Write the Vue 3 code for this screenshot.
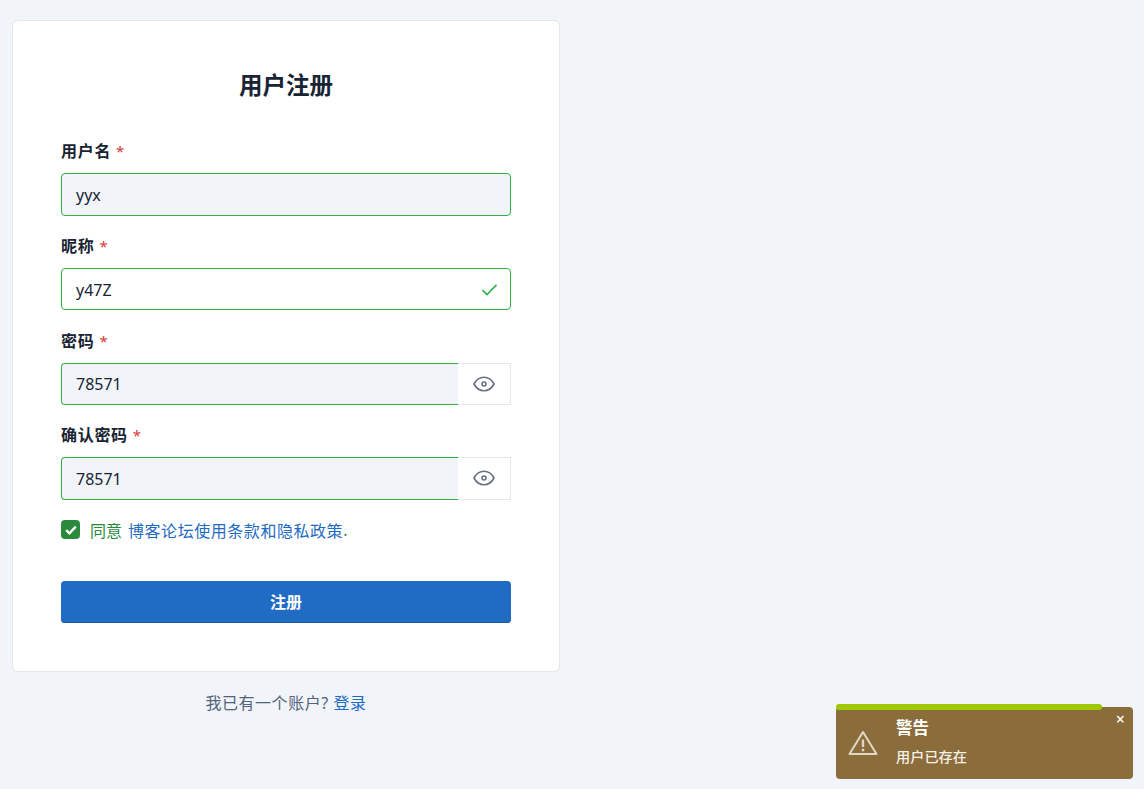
<script setup>
const fields = [
  { label: '用户名', value: 'yyx', kind: 'filled' },
  { label: '昵称', value: 'y47Z', kind: 'check' },
  { label: '密码', value: '78571', kind: 'eye' },
  { label: '确认密码', value: '78571', kind: 'eye' },
]
</script>

<template>
  <main class="page">
    <section class="card">
      <h1 class="title">用户注册</h1>
      <form class="form" @submit.prevent>
        <div v-for="f in fields" :key="f.label" class="field">
          <label class="label">{{ f.label }}<span class="req">*</span></label>
          <div class="group">
            <div class="input" :class="{ white: f.kind === 'check', joined: f.kind === 'eye' }">
              <span>{{ f.value }}</span>
              <svg v-if="f.kind === 'check'" class="check" width="15" height="12" viewBox="0 0 15 12" fill="none">
                <path d="M.5 6 5 10.500 14.500.8" stroke="#2fb344" stroke-width="1.600" />
              </svg>
            </div>
            <button v-if="f.kind === 'eye'" type="button" class="eye">
              <svg width="22" height="16" viewBox="0 0 22 16" fill="none" stroke="#667085" stroke-width="1.600">
                <path d="M1 8C3.500 3.400 7 1.200 11 1.200S18.500 3.400 21 8c-2.500 4.600-6 6.800-10 6.800S3.500 12.600 1 8Z" />
                <circle cx="11" cy="8" r="2" />
              </svg>
            </button>
          </div>
        </div>
        <div class="agree">
          <span class="box">
            <svg width="12" height="10" viewBox="0 0 12 10" fill="none"><path d="M1.200 5.200 4.400 8.300 10.800 1.600" stroke="#fff" stroke-width="2.400" /></svg>
          </span>
          <span class="agree-text">同意</span>
          <a class="link terms">博客论坛使用条款和隐私政策</a><span class="dot">.</span>
        </div>
        <button type="button" class="submit">注册</button>
      </form>
    </section>
    <p class="foot">我已有一个账户? <a class="link">登录</a></p>

    <aside class="toast">
      <div class="bar"></div>
      <svg class="warn" width="30" height="26" viewBox="0 0 30 26" fill="none" stroke="#e0d8c6" stroke-width="2">
        <path d="M15 2 28.500 24H1.500Z" stroke-linejoin="round" />
        <path d="M15 9.500v7.500M15 18.800v2.400" stroke-width="2.400" />
      </svg>
      <div class="toast-body">
        <div class="toast-title">警告</div>
        <div class="toast-msg">用户已存在</div>
      </div>
      <span class="close">×</span>
    </aside>
  </main>
</template>

<style>
html, body { margin: 0; background: #f1f4f9; }
</style>

<style scoped>
.page {
  min-height: 789px;
  box-sizing: border-box;
  padding: 20px 0 0 12px;
  width: 1144px;
  font-family: "Noto Sans", "Noto Sans CJK SC", sans-serif;
  color: #182433;
  font-size: 16px;
}
.card {
  width: 548px;
  height: 652px;
  box-sizing: border-box;
  background: #fff;
  border: 1px solid #e3e6ea;
  border-radius: 6px;
  padding: 48px;
}
.title {
  margin: 0 0 38.330px;
  font-size: 23.500px;
  line-height: 32px;
  font-weight: 600;
  text-align: center;
}
.field { height: 94.670px; }
.label {
  display: block;
  height: 24px;
  line-height: 24px;
  font-weight: 600;
  font-size: 16px;
  margin-bottom: 10px;
  letter-spacing: 0.7px;
}
.req { color: #d63939; margin-left: 5px; font-weight: 400; font-size: 15px; }
.group { display: flex; height: 42.400px; }
.input {
  flex: 1;
  box-sizing: border-box;
  display: flex;
  align-items: center;
  justify-content: space-between;
  padding: 1px 14px 0;
  border: 1px solid #2fb344;
  border-radius: 4px;
  background: #f1f4f9;
  line-height: 24px;
}
.input.white { background: #fff; }
.input.joined { border-right: 0; border-radius: 4px 0 0 4px; }
.check { margin-right: -1px; }
.eye {
  width: 53px;
  padding: 0;
  display: flex;
  align-items: center;
  justify-content: center;
  background: #fff;
  border: 1px solid #e3e6ea;
  border-left: 0;
}
.agree {
  display: flex;
  align-items: center;
  height: 24px;
}
.box {
  width: 19px;
  height: 19px;
  border-radius: 4px;
  background: #2a8a3c;
  display: flex;
  align-items: center;
  justify-content: center;
  margin-right: 10px;
}
.agree-text { color: #2a8a3c; }
.terms { margin-left: 6px; letter-spacing: 0.55px; }
.dot { color: #2a8a3c; }
.link { color: #1f6bc2; }
.submit {
  display: block;
  width: 100%;
  height: 42px;
  margin-top: 39px;
  padding: 0 0 2px;
  border: 0;
  border-radius: 4px;
  background: #206bc4;
  box-shadow: inset 0 -1px 0 #1a5aa5;
  color: #fff;
  font-family: inherit;
  font-size: 16px;
  font-weight: 600;
}
.foot {
  width: 548px;
  margin: 19px 0 0;
  text-align: center;
  line-height: 24px;
  color: #54637a;
  letter-spacing: 0.55px;
}
.toast {
  position: absolute;
  left: 836px;
  top: 707px;
  width: 297px;
  height: 72px;
  box-sizing: border-box;
  background: #8b6c3b;
  border-radius: 4px;
  color: #fff;
}
.bar {
  position: absolute;
  left: 0;
  top: -3px;
  width: 266px;
  height: 6px;
  background: #a0c800;
  border-radius: 3px;
}
.warn { position: absolute; left: 12px; top: 23px; }
.toast-body { position: absolute; left: 60px; top: 9px; }
.toast-title { font-size: 16.500px; font-weight: 700; line-height: 24px; }
.toast-msg { font-size: 14.200px; line-height: 20px; margin-top: 7px; font-weight: 500; color: #f5f0e6; }
.close { position: absolute; right: 8px; top: 2px; font-size: 16px; line-height: 20px; font-weight: 500; }
</style>
